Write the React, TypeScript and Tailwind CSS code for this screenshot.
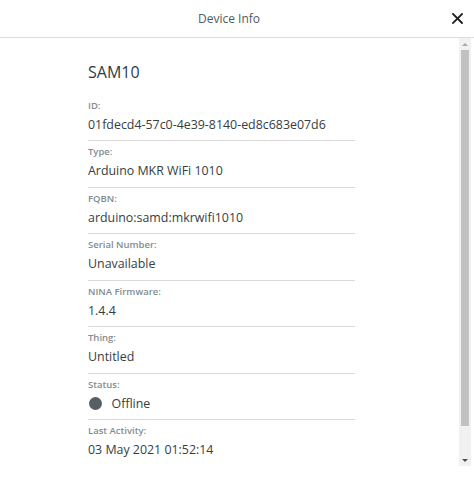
import React from 'react'

const rows: { label: string; value: string; status?: boolean }[] = [
  { label: 'ID:', value: '01fdecd4-57c0-4e39-8140-ed8c683e07d6' },
  { label: 'Type:', value: 'Arduino MKR WiFi 1010' },
  { label: 'FQBN:', value: 'arduino:samd:mkrwifi1010' },
  { label: 'Serial Number:', value: 'Unavailable' },
  { label: 'NINA Firmware:', value: '1.4.4' },
  { label: 'Thing:', value: 'Untitled' },
  { label: 'Status:', value: 'Offline', status: true },
  { label: 'Last Activity:', value: '03 May 2021 01:52:14' },
]

// fake scrollbar, the modal body is scrolled to the top
function Scrollbar() {
  return (
    <div className="w-[12px] mr-[3px] bg-[#f1f1f1] flex flex-col">
      <div className="h-[12px] flex items-center justify-center">
        <div className="w-0 h-0 border-l-[3px] border-r-[3px] border-b-[3px] border-l-transparent border-r-transparent border-b-[#a8a8a8]" />
      </div>
      <div className="h-[376px] mx-[2px] bg-[#c1c1c1]" />
      <div className="flex-1" />
      <div className="h-[12px] flex items-center justify-center">
        <div className="w-0 h-0 border-l-[3px] border-r-[3px] border-t-[3px] border-l-transparent border-r-transparent border-t-[#505050]" />
      </div>
    </div>
  )
}

export default function App() {
  return (
    <div className="w-[474px] h-[477px] bg-white flex flex-col overflow-hidden font-['Open_Sans',sans-serif]">
      {/* header */}
      <div className="h-[38px] border-b border-[#dcdcdc] flex items-center shrink-0">
        <div className="flex-1 pl-[18px] text-center text-[12px] text-[#4e5b61]">Device Info</div>
        <button className="w-[34px] h-[37px] flex items-center justify-center">
          <svg width="11" height="11" viewBox="0 0 11 11">
            <path d="M1 1L10 10M10 1L1 10" stroke="#1f1f1f" strokeWidth="1.8" strokeLinecap="square" />
          </svg>
        </button>
      </div>

      {/* body */}
      <div className="h-[428px] flex shrink-0">
        <div className="flex-1 overflow-hidden pl-[88px] pt-[23px]">
          <div className="text-[16px] leading-[22px] text-[#333b3f] mb-[11.5px]">SAM10</div>
          <div className="w-[267px]">
            {rows.map(row => (
              <div key={row.label} className="pt-[3px] pb-[5.5px] border-b border-[#dadada]">
                <div className="text-[9.5px] leading-[16px] font-semibold text-[#838d90]">{row.label}</div>
                <div className="mt-[1px] text-[12.4px] leading-[20px] text-[#353e42] flex items-center">
                  {row.status && <span className="w-[13px] h-[13px] rounded-full bg-[#575f66] ml-[0.5px] mr-[10px]" />}
                  {row.value}
                </div>
              </div>
            ))}
          </div>
        </div>
        <Scrollbar />
      </div>
    </div>
  )
}
